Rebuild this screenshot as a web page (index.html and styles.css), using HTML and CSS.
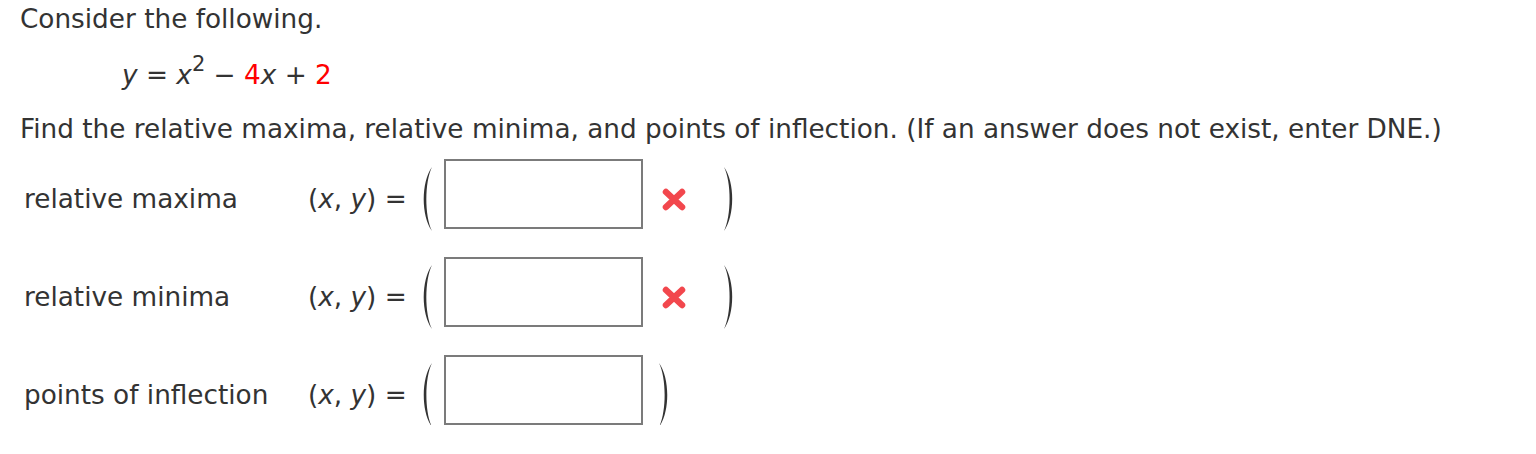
FILE: index.html
```html
<!DOCTYPE html>
<html>
<head>
<meta charset="utf-8">
<link rel="stylesheet" href="styles.css">
</head>
<body>
<div class="page">
  <p class="intro">Consider the following.</p>
  <div class="equation"><i>y</i> = <i>x</i><sup>2</sup> − <span class="red">4</span><i>x</i> + <span class="red">2</span></div>
  <p class="instructions">Find the relative maxima, relative minima, and points of inflection. (If an answer does not exist, enter DNE.)</p>
  <div class="rows">
    <div class="row">
      <span class="label">relative maxima</span>
      <span class="lhs">(<i>x</i>, <i>y</i>) =</span>
      <svg class="paren" width="14" height="66" viewBox="0 0 14 66"><path d="M12 1 C1 16 1 50 12 65 C4.5 50 4.5 16 12 1 Z" fill="#333"/></svg>
      <span class="box"></span>
      <svg class="xmark" width="32" height="28" viewBox="0 0 32 28"><path d="M8 6 L24 21 M24 6 L8 21" stroke="#f2474d" stroke-width="6.5" stroke-linecap="round"/></svg>
      <svg class="paren rp" width="14" height="66" viewBox="0 0 14 66"><path d="M2 1 C13 16 13 50 2 65 C9.5 50 9.5 16 2 1 Z" fill="#333"/></svg>
    </div>
    <div class="row">
      <span class="label">relative minima</span>
      <span class="lhs">(<i>x</i>, <i>y</i>) =</span>
      <svg class="paren" width="14" height="66" viewBox="0 0 14 66"><path d="M12 1 C1 16 1 50 12 65 C4.5 50 4.5 16 12 1 Z" fill="#333"/></svg>
      <span class="box"></span>
      <svg class="xmark" width="32" height="28" viewBox="0 0 32 28"><path d="M8 6 L24 21 M24 6 L8 21" stroke="#f2474d" stroke-width="6.5" stroke-linecap="round"/></svg>
      <svg class="paren rp" width="14" height="66" viewBox="0 0 14 66"><path d="M2 1 C13 16 13 50 2 65 C9.5 50 9.5 16 2 1 Z" fill="#333"/></svg>
    </div>
    <div class="row">
      <span class="label">points of inflection</span>
      <span class="lhs">(<i>x</i>, <i>y</i>) =</span>
      <svg class="paren" width="14" height="66" viewBox="0 0 14 66"><path d="M12 1 C1 16 1 50 12 65 C4.5 50 4.5 16 12 1 Z" fill="#333"/></svg>
      <span class="box"></span>
      <svg class="paren rp-near" width="14" height="66" viewBox="0 0 14 66"><path d="M2 1 C13 16 13 50 2 65 C9.5 50 9.5 16 2 1 Z" fill="#333"/></svg>
    </div>
  </div>
</div>
</body>
</html>
```

FILE: styles.css
```css
html, body {
  margin: 0;
  padding: 0;
  background: #fff;
}
body {
  font-family: "DejaVu Sans", Verdana, sans-serif;
  font-size: 26.3px;
  color: #333;
}
.page {
  padding: 3px 0 0 20px;
}
.intro {
  margin: 0;
  line-height: 32px;
}
.equation {
  margin: 24px 0 0 102px;
  line-height: 32px;
}
.equation sup {
  font-size: 21px;
  line-height: 0;
  vertical-align: 13px;
}
.red {
  color: #f00;
}
.instructions {
  margin: 22px 0 0 0;
  line-height: 32px;
}
.rows {
  display: flex;
  flex-direction: column;
  gap: 28px;
  margin-top: 14px;
}
.row {
  display: flex;
  align-items: center;
  height: 70px;
}
.label {
  width: 284px;
  padding-left: 4px;
  padding-top: 10px;
}
.lhs {
  width: 112px;
  padding-top: 10px;
}
.paren {
  display: block;
  margin-top: 10px;
}
.box {
  display: block;
  width: 195px;
  height: 66px;
  border: 2px solid #7b7b7b;
  margin-left: 10px;
}
.xmark {
  display: block;
  margin-left: 15px;
  margin-top: 12px;
}
.rp {
  margin-left: 32px;
}
.rp-near {
  margin-left: 14px;
}
```
